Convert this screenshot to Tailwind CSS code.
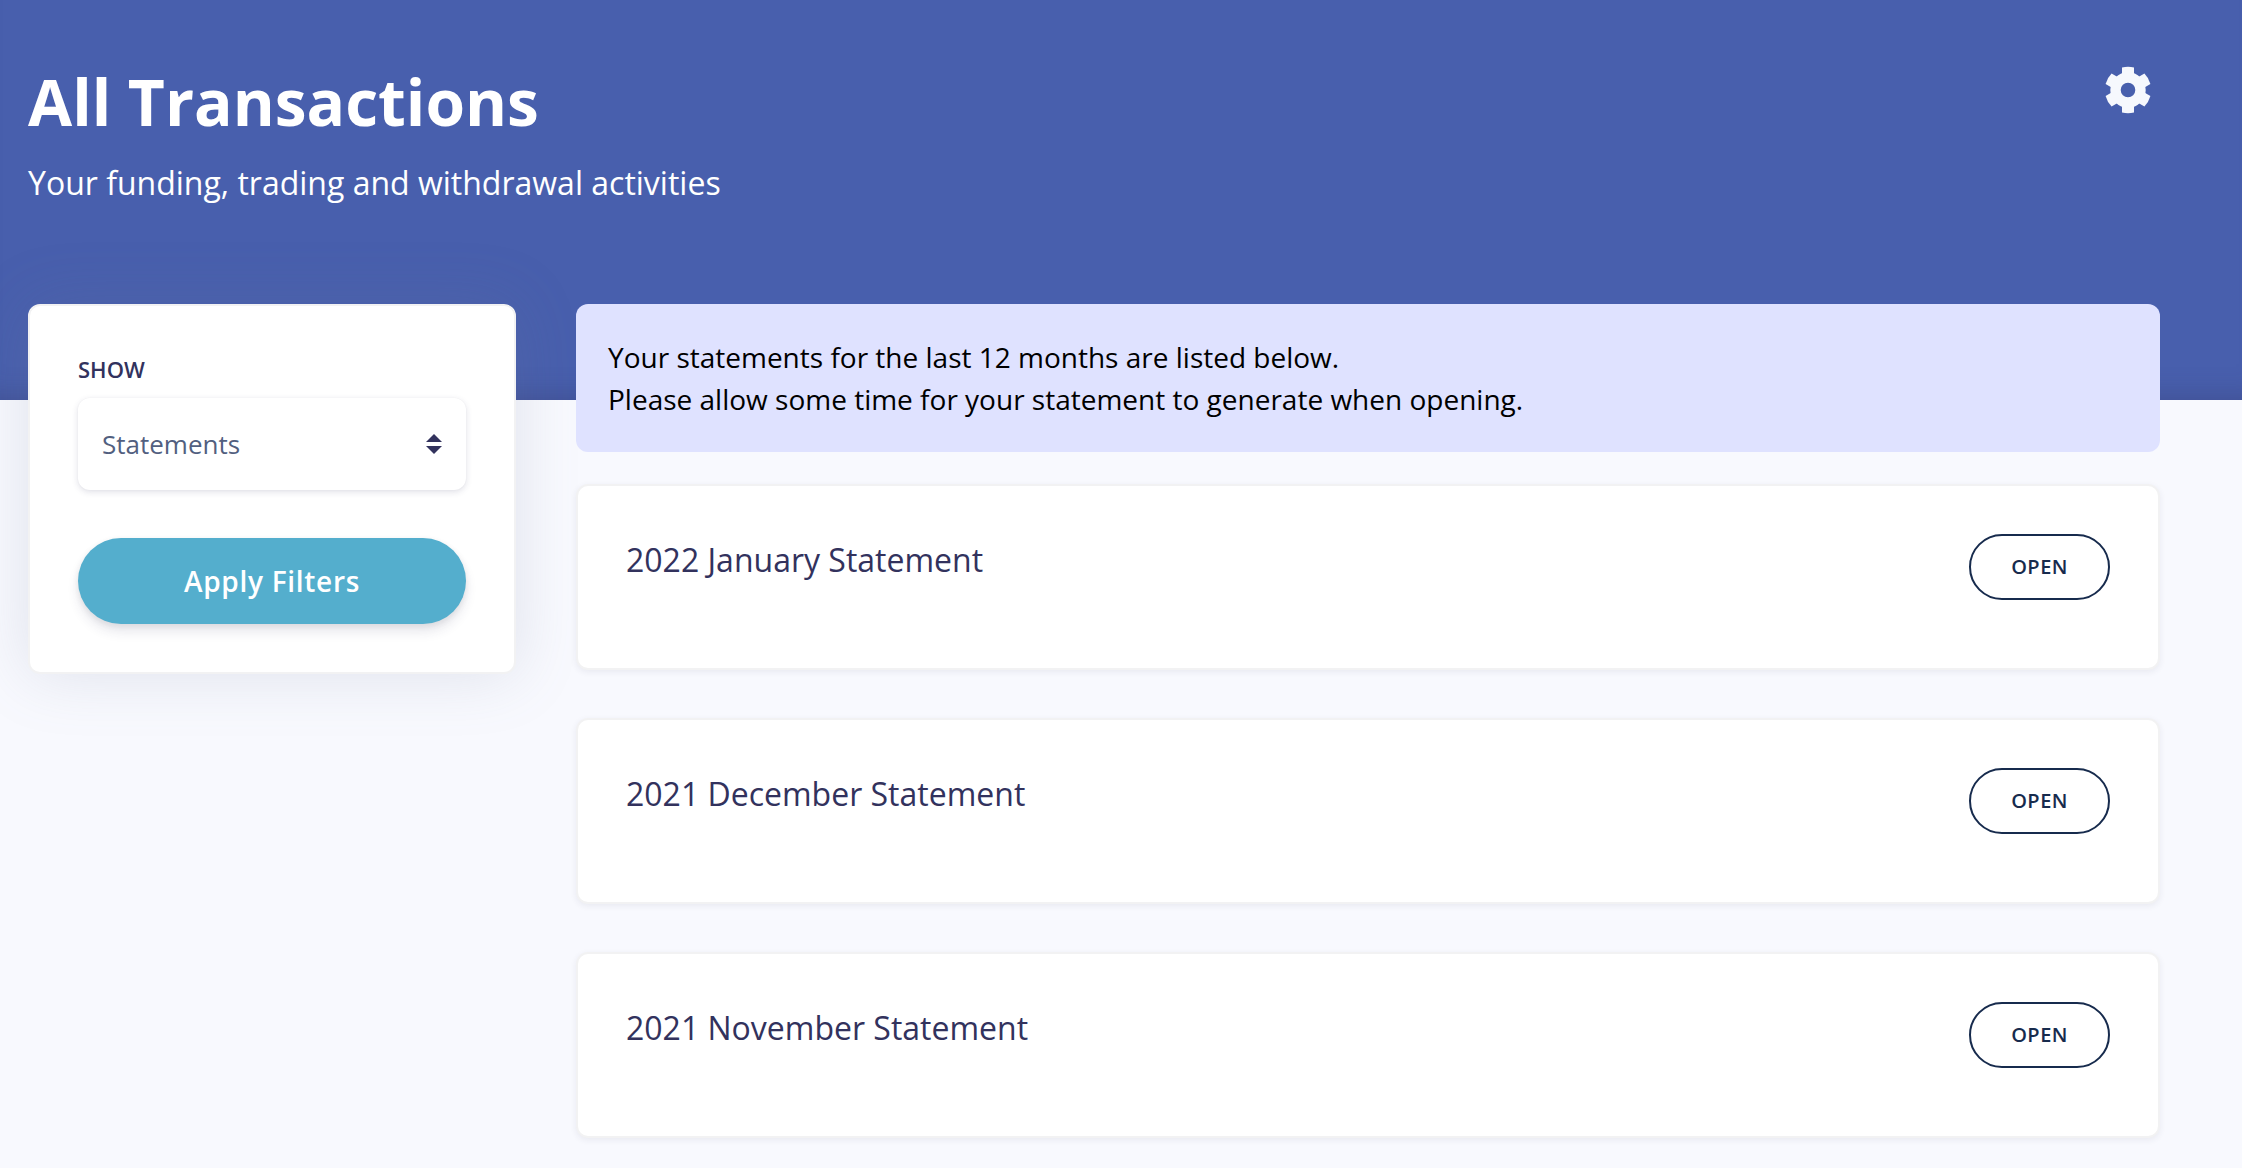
<!DOCTYPE html>
<html lang="en">
<head>
    <meta charset="UTF-8">
    <meta name="viewport" content="width=device-width, initial-scale=1.0">
    <title>All Transactions</title>
    <script src="https://cdn.jsdelivr.net/npm/@tailwindcss/browser@4"></script>
</head>
<body class="min-h-screen bg-[#f8f9fe] font-['Open_Sans',sans-serif] text-[#32325d]">
    <!-- Header -->
    <header class="bg-[#485fad] pt-15 pb-[194px] pl-7 pr-[82px] text-white shadow-[inset_0_-30px_30px_-30px_rgba(50,50,93,0.4)]">
        <div class="flex items-start justify-between">
            <div>
                <h1 class="text-[64px] leading-[84px] font-bold">All Transactions</h1>
                <p class="mt-4 text-[32px] leading-[46px]">Your funding, trading and withdrawal activities</p>
            </div>
            <button type="button" aria-label="Settings" class="px-2 py-1.5 text-[#f6f8fd]">
                <svg class="size-12" viewBox="-24 -24 48 48" fill="currentColor">
                    <defs>
                        <path id="tooth" d="M-6 -14V-22.4A23.2 23.2 0 0 1 6 -22.4V-14z"/>
                    </defs>
                    <circle r="12.5" fill="none" stroke="currentColor" stroke-width="10.4"/>
                    <use href="#tooth"/>
                    <use href="#tooth" transform="rotate(60)"/>
                    <use href="#tooth" transform="rotate(120)"/>
                    <use href="#tooth" transform="rotate(180)"/>
                    <use href="#tooth" transform="rotate(240)"/>
                    <use href="#tooth" transform="rotate(300)"/>
                </svg>
            </button>
        </div>
    </header>

    <!-- Main Content -->
    <main class="-mt-24 flex items-start gap-15 pb-7 pl-7 pr-[82px]">
        <!-- Filters -->
        <form class="w-[488px] shrink-0 rounded-xl border-2 border-[#f2f2f3] bg-white p-12 shadow-[0_0_64px_rgba(110,120,150,0.18)]">
            <label for="show" class="block text-[22px] leading-[30px] font-semibold">SHOW</label>
            <div class="relative mt-[14px]">
                <select id="show" class="block h-[92px] w-full appearance-none rounded-xl bg-white px-6 text-[26px] text-[#525f7f] shadow-[0_2px_6px_rgba(50,50,93,0.15),0_0_2px_rgba(0,0,0,0.04)]">
                    <option>Statements</option>
                    <option>Transactions</option>
                </select>
                <svg class="pointer-events-none absolute top-9 right-6 h-5 w-4" viewBox="0 0 16 20" fill="#32325d">
                    <path d="M8 0l8 8H0zM8 20l8-8H0z"/>
                </svg>
            </div>
            <button type="button" class="mt-12 h-[86px] w-full rounded-full bg-[#54aecd] text-[28px] font-semibold tracking-wide text-white shadow-[0_8px_12px_rgba(50,50,93,0.11),0_2px_6px_rgba(0,0,0,0.08)]">Apply Filters</button>
        </form>

        <!-- Statements -->
        <div class="min-w-0 flex-1">
            <div class="rounded-xl bg-[#dfe2ff] p-8 text-[28px] leading-[42px] text-black">
                <p>Your statements for the last 12 months are listed below.</p>
                <p>Please allow some time for your statement to generate when opening.</p>
            </div>

            <div class="mt-8 space-y-12">
                <div class="flex items-start justify-between rounded-xl border-2 border-[#f2f2f3] bg-white px-12 pt-12 pb-[68px] shadow-[0_2px_6px_rgba(50,50,93,0.08)]">
                    <h2 class="text-[32px] leading-[52px]">2022 January Statement</h2>
                    <button type="button" class="h-[66px] rounded-full border-2 border-[#172b4d] px-10 text-[20px] font-semibold tracking-wide text-[#172b4d]">OPEN</button>
                </div>
                <div class="flex items-start justify-between rounded-xl border-2 border-[#f2f2f3] bg-white px-12 pt-12 pb-[68px] shadow-[0_2px_6px_rgba(50,50,93,0.08)]">
                    <h2 class="text-[32px] leading-[52px]">2021 December Statement</h2>
                    <button type="button" class="h-[66px] rounded-full border-2 border-[#172b4d] px-10 text-[20px] font-semibold tracking-wide text-[#172b4d]">OPEN</button>
                </div>
                <div class="flex items-start justify-between rounded-xl border-2 border-[#f2f2f3] bg-white px-12 pt-12 pb-[68px] shadow-[0_2px_6px_rgba(50,50,93,0.08)]">
                    <h2 class="text-[32px] leading-[52px]">2021 November Statement</h2>
                    <button type="button" class="h-[66px] rounded-full border-2 border-[#172b4d] px-10 text-[20px] font-semibold tracking-wide text-[#172b4d]">OPEN</button>
                </div>
            </div>
        </div>
    </main>
</body>
</html>
